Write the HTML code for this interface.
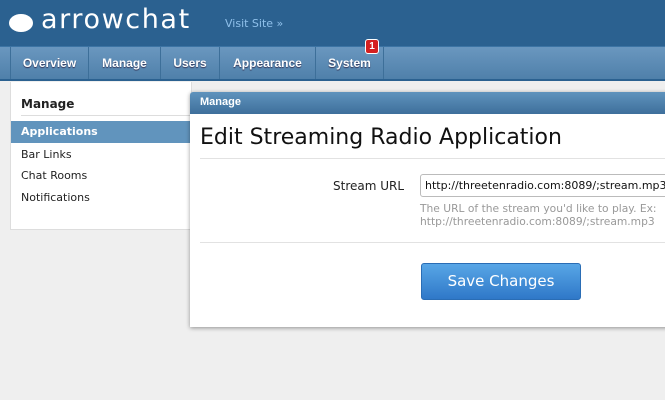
<!DOCTYPE html>
<html><head><style>
*{margin:0;padding:0;box-sizing:border-box}
body{width:665px;height:400px;overflow:hidden;background:#efefef;font-family:"DejaVu Sans","Liberation Sans",sans-serif;position:relative}
.hdr{position:absolute;left:0;top:0;width:665px;height:46px;background:#2b6190}
.logo{position:absolute;left:41px;top:4px;color:#fff;font-size:27px;font-family:"DejaVu Sans",sans-serif;letter-spacing:1.6px}
.bub{position:absolute;left:9px;top:14px;width:24px;height:18px;background:#fff;border-radius:50%}
.visit{position:absolute;left:225px;top:17px;color:#8fc0ea;font-size:11px}
.nav{position:absolute;left:0;top:46px;width:665px;height:35px;background:linear-gradient(#6a97bf,#4f80aa);border-top:1px solid #3c74a4;border-bottom:2px solid #2b6190}
.tab{position:absolute;top:0;height:32px;border-left:1px solid #3d6f99;color:#fff;font-weight:bold;font-size:12px;line-height:32px;text-align:center;font-family:"Liberation Sans",sans-serif;text-shadow:0 1px 1px #335}
.badge{position:absolute;left:365px;top:39px;width:14px;height:15px;background:#d42020;border:1px solid #fff;border-radius:3px;color:#fff;font-size:10px;font-weight:bold;text-align:center;line-height:13px;font-family:"Liberation Sans",sans-serif}
.side{position:absolute;left:10px;top:82px;width:182px;height:148px;background:#fff;border:1px solid #ddd;border-top:none}
.side h3{position:absolute;left:10px;top:15px;font-size:12px;font-weight:bold;color:#222}
.side .ln{position:absolute;left:10px;right:0;top:33px;border-top:1px solid #ddd}
.side .it{position:absolute;left:10px;font-size:11px;color:#222}
.sel{position:absolute;left:0;right:0;top:39px;height:22px;background:#6194bd}
.dlg{position:absolute;left:190px;top:92px;width:480px;height:235px;background:#fff;box-shadow:0 1px 4px rgba(0,0,0,.4);border-radius:3px 0 0 0}
.dh{height:22px;background:linear-gradient(#5f93bd,#3e6f9b);color:#fff;font-size:11px;font-weight:bold;padding:4px 10px;border-radius:3px 0 0 0;font-family:"Liberation Sans",sans-serif}
.t{position:absolute;left:10px;top:33px;font-size:22px;color:#111}
.hr{position:absolute;left:10px;right:0;border-top:1px solid #e2e2e2}
.lab{position:absolute;left:143px;top:87px;font-size:12px;color:#222}
.inp{position:absolute;left:230px;top:82px;width:260px;height:23px;border:1px solid #bbb;border-radius:3px;font-size:11px;padding:4px 4px;color:#111;white-space:nowrap;overflow:hidden}
.help{position:absolute;left:230px;top:110px;font-size:10.7px;color:#999;line-height:13px}
.btn{position:absolute;left:231px;top:171px;width:160px;height:37px;border-radius:3px;background:linear-gradient(#58a6e6,#2f78c8);border:1px solid #2a6db5;color:#fff;font-size:15px;text-align:center;line-height:35px}
</style></head><body>
<div class="hdr"><div class="bub"></div><div class="logo">arrowchat</div><div class="visit">Visit Site »</div></div>
<div class="nav">
<div class="tab" style="left:10px;width:78px">Overview</div>
<div class="tab" style="left:88px;width:72px">Manage</div>
<div class="tab" style="left:160px;width:59px">Users</div>
<div class="tab" style="left:219px;width:96px">Appearance</div>
<div class="tab" style="left:315px;width:69px;border-right:1px solid #3d6f99">System</div>
</div>
<div class="badge">1</div>
<div class="side"><h3>Manage</h3><div class="ln"></div><div class="sel"></div>
<div class="it" style="top:43px;color:#fff;font-weight:bold">Applications</div>
<div class="it" style="top:66px">Bar Links</div>
<div class="it" style="top:87px">Chat Rooms</div>
<div class="it" style="top:109px">Notifications</div></div>
<div class="dlg"><div class="dh">Manage</div>
<div class="t">Edit Streaming Radio Application</div>
<div class="hr" style="top:66px"></div>
<div class="lab">Stream URL</div>
<div class="inp">http://threetenradio.com:8089/;stream.mp3</div>
<div class="help">The URL of the stream you'd like to play. Ex:<br>http://threetenradio.com:8089/;stream.mp3</div>
<div class="hr" style="top:150px"></div>
<div class="btn">Save Changes</div>
</div>
</body></html>
